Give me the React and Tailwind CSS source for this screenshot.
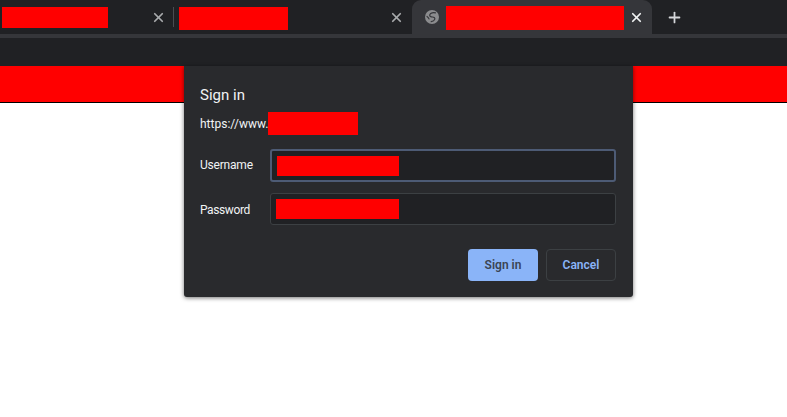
import { Plus, X } from "lucide-react";

function Globe() {
  return (
    <svg width="16" height="16" viewBox="0 0 16 16">
      <circle cx="8" cy="8" r="7" fill="#8b8c8e" />
      <path
        d="M11.500 3.900C9.500 3.300 6.500 3.800 5.800 5.600 5.200 7.200 7 8 8.500 8c1.700 0 2.700 1 2.200 2.400-.4 1.200-1.800 2-3.500 2.200M3 7.500c.8.500 1.600 1.300 2 2.400"
        fill="none"
        stroke="#35363a"
        strokeWidth="1.2"
        strokeLinecap="round"
      />
    </svg>
  );
}

export default function App() {
  return (
    <div className="relative w-[787px] h-[417px] overflow-hidden bg-white font-['Roboto','Open_Sans',sans-serif]">
      {/* Tab strip */}
      <div className="flex h-[38px] bg-[#202124] border-b-4 border-[#35363a]">
        <div className="flex w-[173px] h-[34px] pl-[2px] pt-[7px]">
          <div className="w-[106px] h-[21px] bg-[#ff0000]"></div>
          <X size={15} strokeWidth={2.75} className="ml-[43px] mt-[3px] text-[#a9abad]" />
        </div>
        <div className="w-px h-[20px] mt-[7px] bg-[#4a4c50]"></div>
        <div className="flex w-[238px] h-[34px] pl-[5px] pt-[7px]">
          <div className="w-[109px] h-[23px] bg-[#ff0000]"></div>
          <X size={15} strokeWidth={2.75} className="ml-[101px] mt-[3px] text-[#a9abad]" />
        </div>
        <div className="flex items-start w-[240px] h-[38px] -mb-1 pl-[12px] pt-[6px] bg-[#35363a] rounded-t-[9px]">
          <div className="mt-[3px]">
            <Globe />
          </div>
          <div className="ml-[6px] w-[178px] h-[24px] bg-[#ff0000]"></div>
          <X size={15} strokeWidth={2.75} className="ml-[5px] mt-[4px] text-[#f1f3f4]" />
        </div>
        <Plus size={17} strokeWidth={2.5} className="ml-[14px] mt-[9px] text-[#d5d7da]" />
      </div>

      {/* Toolbar */}
      <div className="h-[28px] bg-[#202124]"></div>

      {/* Page */}
      <div className="h-[37px] bg-[#ff0000] border-b border-black"></div>

      {/* Sign in dialog */}
      <div className="absolute left-[184px] top-[66px] w-[449px] h-[231px] px-[16px] pt-[16px] bg-[#292a2d] rounded-b-[3px] shadow-[0_1px_4px_rgba(0,0,0,0.55)] text-[#f1f3f4]">
        <div className="h-[24px] pt-[1px] text-[15px] leading-[24px]">Sign in</div>
        <div className="flex items-center h-[23px] mt-[6px] text-[12px]">
          <span className="w-[68px]">https://www.</span>
          <div className="w-[90px] h-[23px] bg-[#ff0000]"></div>
        </div>

        <div className="flex items-center mt-[14px] h-[33px]">
          <label className="w-[70px] text-[12px] tracking-[-0.2px] -mt-[1px]">Username</label>
          <div className="flex items-center w-[346px] h-[33px] pl-[5px] bg-[#202124] border-2 border-[#4d5b75] rounded-[3px]">
            <div className="w-[122px] h-[20px] bg-[#ff0000]"></div>
          </div>
        </div>

        <div className="flex items-center mt-[11px] h-[32px]">
          <label className="w-[70px] text-[12px] tracking-[-0.4px] mt-[1px]">Password</label>
          <div className="flex items-center w-[346px] h-[32px] pl-[5px] bg-[#202124] border border-[#3c4043] rounded-[3px]">
            <div className="w-[123px] h-[20px] bg-[#ff0000]"></div>
          </div>
        </div>

        <div className="flex justify-end gap-[8px] mt-[24px] pr-[1px]">
          <button className="w-[70px] h-[32px] bg-[#8ab4f8] rounded-[4px] text-[12px] font-semibold text-[#3b4453]">Sign in</button>
          <button className="w-[70px] h-[32px] border border-[#3c4043] rounded-[4px] text-[12px] font-semibold text-[#8ab4f8]">Cancel</button>
        </div>
      </div>
    </div>
  );
}
